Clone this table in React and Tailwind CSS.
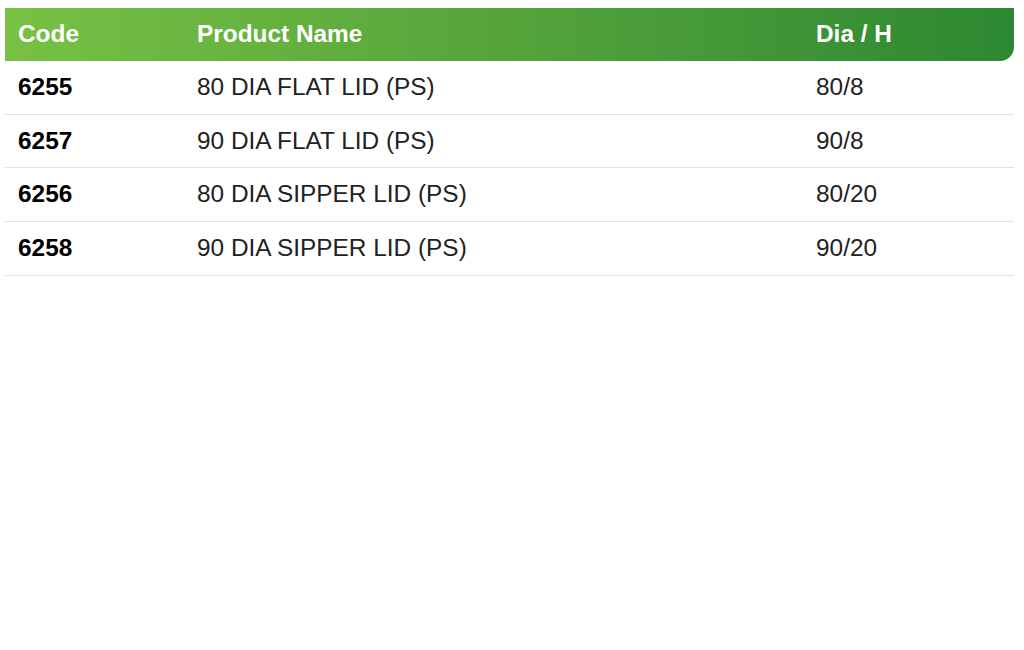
const rows = [
  { code: '6255', name: '80 DIA FLAT LID (PS)', size: '80/8' },
  { code: '6257', name: '90 DIA FLAT LID (PS)', size: '90/8' },
  { code: '6256', name: '80 DIA SIPPER LID (PS)', size: '80/20' },
  { code: '6258', name: '90 DIA SIPPER LID (PS)', size: '90/20' },
];

export default function App() {
  return (
    <div className="min-h-screen bg-white pt-2 pl-[5px] pr-[10px] font-['Liberation_Sans',Arial,sans-serif]">
      <table className="w-full border-collapse text-left">
        <thead>
          <tr className="h-[52.5px] bg-gradient-to-r from-[#78c144] to-[#2c8832] text-[24.4px] font-bold text-white">
            <th className="w-[179px] pl-[13px] align-middle">Code</th>
            <th className="w-[619px] pl-[13px] align-middle">Product Name</th>
            <th className="rounded-br-[14px] pl-[13px] align-middle">Dia / H</th>
          </tr>
        </thead>
        <tbody>
          {rows.map(row => (
            <tr key={row.code} className="h-[53.7px] border-b border-[#e2e2e2] text-[24.4px]">
              <td className="pl-[13px] font-bold text-black">{row.code}</td>
              <td className="pl-[13px] text-[#222]">{row.name}</td>
              <td className="pl-[13px] text-[#222]">{row.size}</td>
            </tr>
          ))}
        </tbody>
      </table>
    </div>
  );
}
